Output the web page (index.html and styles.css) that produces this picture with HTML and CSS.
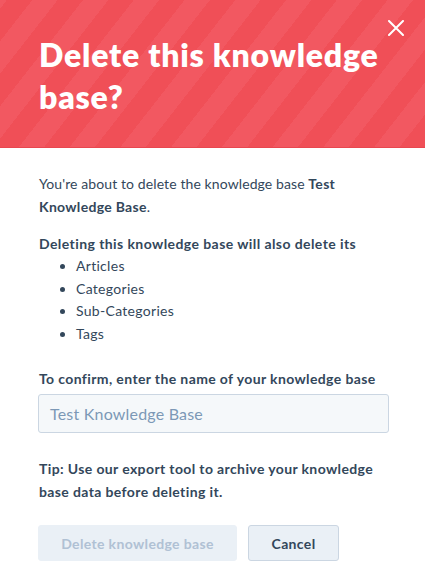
FILE: index.html
```html
<!DOCTYPE html>
<html>
<head>
<meta charset="utf-8">
<link rel="stylesheet" href="styles.css">
</head>
<body>
<div class="dialog">
  <header class="header">
    <h1 class="title">Delete this knowledge base?</h1>
    <button class="close" aria-label="Close">
      <svg width="16" height="16" viewBox="0 0 16 16"><path d="M1 1L15 15M15 1L1 15" stroke="#fff" stroke-width="2" stroke-linecap="round"/></svg>
    </button>
  </header>
  <main class="body">
    <p class="intro">You're about to delete the knowledge base <strong>Test Knowledge Base</strong>.</p>
    <p class="strong">Deleting this knowledge base will also delete its</p>
    <ul class="list">
      <li>Articles</li>
      <li>Categories</li>
      <li>Sub-Categories</li>
      <li>Tags</li>
    </ul>
    <label class="label">To confirm, enter the name of your knowledge base</label>
    <div class="input">Test Knowledge Base</div>
    <p class="tip">Tip: Use our export tool to archive your knowledge base data before deleting it.</p>
    <div class="actions">
      <button class="btn btn-delete">Delete knowledge base</button>
      <button class="btn btn-cancel">Cancel</button>
    </div>
  </main>
</div>
</body>
</html>
```
FILE: styles.css
```css
* { box-sizing: border-box; }
html, body { margin: 0; padding: 0; background: #fff; }
body { font-family: "Lato", "Liberation Sans", sans-serif; color: #33475b; width: 425px; }
.dialog { width: 425px; }
.header {
  position: relative;
  height: 148px;
  padding: 34px 30px 0 39px;
  background: repeating-linear-gradient(-52deg, #f04f57 0px, #f04f57 20px, #f25861 20px, #f25861 40px);
  border-bottom: 1px solid #e8474f;
}
.title {
  margin: 0;
  color: #fff;
  font-size: 32px;
  line-height: 42px;
  font-weight: 800;
  letter-spacing: 0.8px;
}
.close {
  position: absolute;
  top: 20px;
  right: 21px;
  width: 16px;
  height: 16px;
  padding: 0;
  border: 0;
  background: none;
  display: flex;
}
.body { padding: 24px 36px 0 39px; font-size: 14px; letter-spacing: 0.1px; }
p { margin: 0; }
.intro { line-height: 23px; }
.intro strong { font-weight: 700; letter-spacing: 0.3px; }
.strong { font-weight: 700; line-height: 23px; margin-top: 14px; letter-spacing: 0.42px; }
.list { margin: 0; padding: 0 0 0 37px; line-height: 22.6px; letter-spacing: 0.3px; }
.list li { padding-left: 0; }
.label { display: block; font-weight: 700; margin-top: 23px; line-height: 22px; letter-spacing: 0.38px; }
.input {
  margin-top: 4px;
  height: 39px;
  width: 351px;
  margin-left: -1px;
  border: 1px solid #cbd6e2;
  border-radius: 3px;
  background: #f5f8fa;
  color: #7c98b6;
  font-size: 16px;
  line-height: 37px;
  padding-left: 11px;
  letter-spacing: 0.2px;
}
.tip { font-weight: 700; line-height: 23px; margin-top: 24px; letter-spacing: 0.38px; }
.actions { display: flex; gap: 11px; margin-top: 22px; margin-left: -1px; }
.btn {
  height: 36px;
  border-radius: 3px;
  font-family: inherit;
  font-size: 14px;
  font-weight: 700;
  letter-spacing: 0.35px;
  border: 1px solid #eaf0f6;
  background: #eaf0f6;
}
.btn-delete { width: 199px; color: #b0c1d4; }
.btn-cancel { width: 91px; color: #33475b; border-color: #cbd6e2; background: #eaf0f6; }
```
